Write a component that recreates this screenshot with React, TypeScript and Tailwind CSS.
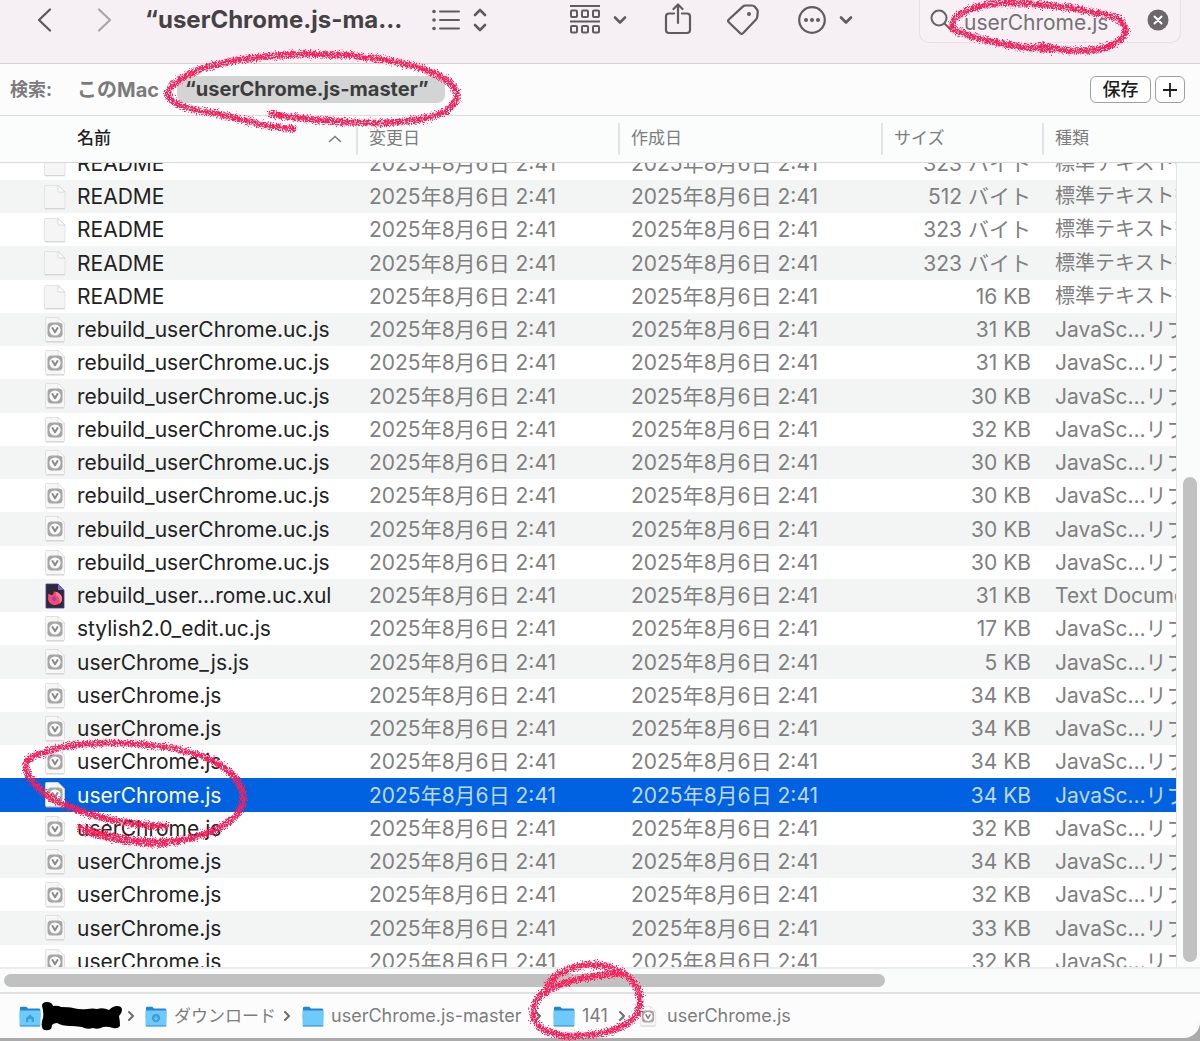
import { useEffect, useRef, useState } from 'react';

type FileKind = 'text' | 'js' | 'xul';

type FileRow = {
  name: string;
  kind: FileKind;
  size: string;
  selected?: boolean;
};

const DATE = '2025年8月6日 2:41';

const KIND_LABEL: Record<FileKind, string> = {
  text: '標準テキスト書類',
  js: 'JavaSc…リプト',
  xul: 'Text Document',
};

const rebuild = (size: string): FileRow => ({ name: 'rebuild_userChrome.uc.js', kind: 'js', size });
const chrome = (size: string, selected = false): FileRow => ({ name: 'userChrome.js', kind: 'js', size, selected });

const files: FileRow[] = [
  { name: 'README', kind: 'text', size: '323 バイト' },
  { name: 'README', kind: 'text', size: '512 バイト' },
  { name: 'README', kind: 'text', size: '323 バイト' },
  { name: 'README', kind: 'text', size: '323 バイト' },
  { name: 'README', kind: 'text', size: '16 KB' },
  rebuild('31 KB'),
  rebuild('31 KB'),
  rebuild('30 KB'),
  rebuild('32 KB'),
  rebuild('30 KB'),
  rebuild('30 KB'),
  rebuild('30 KB'),
  rebuild('30 KB'),
  { name: 'rebuild_user...rome.uc.xul', kind: 'xul', size: '31 KB' },
  { name: 'stylish2.0_edit.uc.js', kind: 'js', size: '17 KB' },
  { name: 'userChrome_js.js', kind: 'js', size: '5 KB' },
  chrome('34 KB'),
  chrome('34 KB'),
  chrome('34 KB'),
  chrome('34 KB', true),
  chrome('32 KB'),
  chrome('34 KB'),
  chrome('32 KB'),
  chrome('33 KB'),
  chrome('32 KB'),
];

function FileIcon({ kind, className }: { kind: FileKind; className: string }) {
  if (kind === 'xul') {
    return (
      <svg viewBox="0 0 22 26" className={className} aria-hidden="true">
        <path d="M2 1h12l6 6v18H2z" fill="#2b2a3d" stroke="#4b3a8c" strokeWidth="0.8" />
        <path d="M14 1l6 6h-6z" fill="#7a6bd0" />
        <path d="M3.800 11.500c1.500-.8 3 .2 4.200.8 1-.8 2.200-2.300 1.700-3.800 5 .5 8.300 3.500 8.300 7.200a6.700 6.700 0 0 1-6.900 6.300c-4 0-7-2.800-7-6.300 0-1.500.3-3-.3-4.200z" fill="#ff4470" />
        <path d="M12 8.800c3.500 1 6 3.700 6 6.900 0 2-1 3.800-2.500 5 .8-4.200-.5-7.200-3.500-8.200z" fill="#ff8093" />
        <path d="M8 14.500c1.200-1.200 3-.8 3.800.3s.2 3-1.400 3.200S7.300 16.300 8 14.500z" fill="#7a4fc4" />
      </svg>
    );
  }
  if (kind === 'text') {
    return (
      <svg viewBox="0 0 22 26" className={className} aria-hidden="true">
        <path d="M1.500 1.500H14l7 6.500v15.500a1 1 0 0 1-1 1H1.500a1 1 0 0 1-1-1v-21a1 1 0 0 1 1-1z" fill="#f5f5f5" stroke="#dedede" strokeWidth="0.8" />
        <path d="M14 1.500V7a1 1 0 0 0 1 1h6z" fill="#ffffff" stroke="#cfcfcf" strokeWidth="0.8" />
        <path d="M1 24.800h20" stroke="#c8c8c8" strokeWidth="0.8" />
      </svg>
    );
  }
  return (
    <svg viewBox="0 0 22 26" className={className} aria-hidden="true">
      <path d="M2.500 0.500H14L20.500 7v16.500a1 1 0 0 1-1 1h-17a1 1 0 0 1-1-1v-22a1 1 0 0 1 1-1z" fill="#f7f7f7" stroke="#dadada" strokeWidth="0.8" />
      <path d="M14 0.500V7h6.500z" fill="#ffffff" stroke="#d4d4d4" strokeWidth="0.6" />
      <rect x="3.500" y="5.500" width="15" height="15" rx="4" fill="#a6a6a6" />
      <circle cx="11" cy="13" r="5.600" fill="#fafafa" />
      <path d="M8.500 11l2.500 4.200 2.500-4.200" fill="none" stroke="#8a8a8a" strokeWidth="2" strokeLinecap="round" strokeLinejoin="round" />
      <path d="M2 25h18" stroke="#c8c8c8" strokeWidth="0.8" />
    </svg>
  );
}

function FolderIcon({ glyph }: { glyph?: 'home' | 'download' }) {
  return (
    <svg viewBox="0 0 22 21" className="h-[21px] w-[22px] shrink-0" aria-hidden="true">
      <path d="M1 2a1.300 1.300 0 0 1 1.300-1.300h5L9 2.500h11A1.300 1.300 0 0 1 21.300 4v8H.7z" fill="#2087cf" />
      <rect x="0.500" y="4.500" width="21" height="16" rx="1.300" fill="#6dcafb" />
      <path d="M1 19.800h20" stroke="#45a6e2" strokeWidth="1.400" />
      {glyph === 'home' && <path d="M7 12l4-3.500 4 3.500v4h-2.500v-3h-3v3H7z" fill="#3b9fdb" />}
      {glyph === 'download' && (
        <>
          <circle cx="11" cy="12" r="4.200" fill="#3b9fdb" />
          <path d="M11 9.800v4M9.300 12.200l1.700 1.700 1.700-1.700" fill="none" stroke="#6dcafb" strokeWidth="1.200" />
        </>
      )}
    </svg>
  );
}

function DownChevron() {
  return (
    <svg viewBox="0 0 14 10" className="h-[10px] w-[14px]" fill="none" stroke="#5f5b5e" strokeWidth="2.600" strokeLinecap="round" strokeLinejoin="round" aria-hidden="true">
      <path d="M2 2.500l5 5 5-5" />
    </svg>
  );
}

function PathArrow() {
  return (
    <svg viewBox="0 0 8 12" className="h-3 w-2 shrink-0" fill="none" stroke="#6c6c6c" strokeWidth="2" strokeLinecap="round" strokeLinejoin="round" aria-hidden="true">
      <path d="M2 2l4 4-4 4" />
    </svg>
  );
}

function Toolbar() {
  const [query, setQuery] = useState('userChrome.js');
  return (
    <header className="flex h-16 shrink-0 items-start border-b border-[#d6d1d4] bg-[#f6f0f4] pl-[37px] pr-[19px]">
      <button aria-label="戻る" className="flex h-10 items-center">
        <svg viewBox="0 0 16 24" className="h-6 w-4" fill="none" stroke="#5a5659" strokeWidth="2.200" strokeLinecap="round" strokeLinejoin="round">
          <path d="M13 1.500L2 12l11 10.500" />
        </svg>
      </button>
      <button aria-label="進む" className="ml-11 flex h-10 items-center">
        <svg viewBox="0 0 16 24" className="h-6 w-4" fill="none" stroke="#aaa5a8" strokeWidth="2.200" strokeLinecap="round" strokeLinejoin="round">
          <path d="M2 1.500L13 12 2 22.500" />
        </svg>
      </button>
      <h1 className="ml-8 h-10 w-[278px] shrink-0 whitespace-nowrap text-2xl leading-10 font-bold text-[#454244]">“userChrome.js-ma...</h1>
      <button aria-label="リスト表示" className="ml-2 flex h-10 items-center gap-3">
        <svg viewBox="0 0 30 24" className="h-6 w-[30px]" fill="none" stroke="#5f5b5e" strokeWidth="2" strokeLinecap="round">
          <path d="M9 3.500h19M9 12h19M9 20.500h19" />
          <g fill="#5f5b5e" stroke="none">
            <circle cx="3" cy="3.500" r="1.800" />
            <circle cx="3" cy="12" r="1.800" />
            <circle cx="3" cy="20.500" r="1.800" />
          </g>
        </svg>
        <svg viewBox="0 0 14 24" className="h-6 w-[14px]" fill="none" stroke="#5f5b5e" strokeWidth="2.600" strokeLinecap="round" strokeLinejoin="round">
          <path d="M2 7l5-5 5 5M2 17l5 5 5-5" />
        </svg>
      </button>
      <button aria-label="グループ分け" className="ml-[82px] flex h-10 items-center gap-3">
        <svg viewBox="0 0 32 32" className="size-8" fill="none" stroke="#5f5b5e" strokeWidth="2">
          <path d="M1 2h30M1 17.500h30" />
          <rect x="2" y="6.500" width="6" height="6.500" rx="1" />
          <rect x="13" y="6.500" width="6" height="6.500" rx="1" />
          <rect x="24" y="6.500" width="6" height="6.500" rx="1" />
          <rect x="2" y="22" width="6" height="6.500" rx="1" />
          <rect x="13" y="22" width="6" height="6.500" rx="1" />
          <rect x="24" y="22" width="6" height="6.500" rx="1" />
        </svg>
        <DownChevron />
      </button>
      <button aria-label="共有" className="ml-[37px] flex h-10 items-center">
        <svg viewBox="0 0 28 34" className="h-[34px] w-7" fill="none" stroke="#5f5b5e" strokeWidth="2.200" strokeLinecap="round" strokeLinejoin="round">
          <path d="M10 10.500H5A3 3 0 0 0 2 13.500V27a3 3 0 0 0 3 3h18a3 3 0 0 0 3-3V13.500a3 3 0 0 0-3-3h-5" />
          <path d="M14 20V2M9.500 6L14 1.500 18.500 6" />
        </svg>
      </button>
      <button aria-label="タグ" className="ml-[33px] flex h-10 items-center">
        <svg viewBox="0 0 36 34" className="h-[34px] w-9" fill="none" stroke="#5f5b5e" strokeWidth="2.200" strokeLinejoin="round">
          <path d="M20.500 2.500H27a4 4 0 0 1 3 1.500l2 2.500a4 4 0 0 1 .8 2.500l-.6 5a4 4 0 0 1-1.200 2.500L18 30.200a2 2 0 0 1-2.800 0L3.800 19.300a2 2 0 0 1 0-2.800L17.800 3.600a4 4 0 0 1 2.700-1.100z" />
          <circle cx="24" cy="11" r="2" fill="#5f5b5e" stroke="none" />
        </svg>
      </button>
      <button aria-label="その他" className="ml-9 flex h-10 items-center gap-3">
        <svg viewBox="0 0 30 30" className="size-[30px]" fill="none" stroke="#5f5b5e" strokeWidth="2.200">
          <circle cx="15" cy="15" r="12.800" />
          <g fill="#5f5b5e" stroke="none">
            <circle cx="9" cy="15" r="2" />
            <circle cx="15" cy="15" r="2" />
            <circle cx="21" cy="15" r="2" />
          </g>
        </svg>
        <DownChevron />
      </button>
      <div className="ml-auto flex h-[43px] w-[262px] items-start rounded-b-[10px] border border-t-0 border-[#e6e0e4] bg-[#f7f1f5] pt-[9px] pl-[10px] pr-[11px]">
        <svg viewBox="0 0 22 22" className="size-[22px] shrink-0" fill="none" stroke="#666265" strokeWidth="2" strokeLinecap="round" aria-hidden="true">
          <circle cx="9" cy="9" r="7.500" />
          <path d="M14.500 14.500l6 6" />
        </svg>
        <input
          aria-label="検索"
          value={query}
          onChange={e => setQuery(e.target.value)}
          className="ml-3 h-7 w-full min-w-0 bg-transparent text-[21px] text-[#757174] outline-none"
        />
        <button aria-label="検索をクリア" className="shrink-0" onClick={() => setQuery('')}>
          <svg viewBox="0 0 22 22" className="size-[22px]">
            <circle cx="11" cy="11" r="10.500" fill="#6b676a" />
            <path d="M7.500 7.500l7 7M14.500 7.500l-7 7" stroke="#fff" strokeWidth="2" strokeLinecap="round" />
          </svg>
        </button>
      </div>
    </header>
  );
}

function ScopeBar() {
  return (
    <div className="flex h-[52px] shrink-0 items-center border-b border-[#dcdcdc] bg-[#fcfcfc] pl-[10px] pr-[15px] text-xl font-bold text-[#7b7b7b]">
      <span className="w-[67px] text-lg">検索:</span>
      <button>このMac</button>
      <button className="ml-[18px] h-[27px] rounded-lg bg-[#d3d5d4] pl-2 pr-4 leading-[27px] text-[#3c3c3c]">“userChrome.js-master”</button>
      <div className="ml-auto flex gap-1 text-lg font-medium text-[#1c1c1c]">
        <button className="h-[27px] w-[61px] rounded-md border border-[#9f9f9f] bg-white leading-[24px]">保存</button>
        <button aria-label="条件を追加" className="flex h-[27px] w-[30px] items-center justify-center rounded-md border border-[#9f9f9f] bg-white">
          <svg viewBox="0 0 16 16" className="size-4" stroke="#1c1c1c" strokeWidth="1.800">
            <path d="M8 1v14M1 8h14" />
          </svg>
        </button>
      </div>
    </div>
  );
}

function FileList() {
  const scroller = useRef<HTMLDivElement>(null);

  // the list opens partly scrolled, with the first row half under the header
  useEffect(() => {
    if (scroller.current) scroller.current.scrollTop = 16;
  }, []);

  const th = 'h-[47px] border-b border-[#d9d9d9] bg-[#fbfcfc] text-left text-[17px] font-normal text-[#7c7c7c]';
  const divider = 'flex h-8 items-center border-l-2 border-[#e4e4e4] pl-[11px]';

  return (
    <div className="relative min-h-0 flex-1 bg-[#fafbfb]">
      <div ref={scroller} className="h-full overflow-y-auto [scrollbar-width:none]">
        <table className="w-full table-fixed border-separate border-spacing-0">
          <colgroup>
            <col className="w-[356px]" />
            <col className="w-[262px]" />
            <col className="w-[263px]" />
            <col className="w-[161px]" />
            <col />
            <col className="w-[23px]" />
          </colgroup>
          <thead className="sticky top-0 z-10">
            <tr>
              <th className={th}>
                <button className="flex w-full items-center justify-between pl-[77px] pr-[14px] font-medium text-[#1f1f1f]">
                  名前
                  <svg viewBox="0 0 14 8" className="h-2 w-[14px]" fill="none" stroke="#7c7c7c" strokeWidth="1.600" aria-hidden="true">
                    <path d="M1 7l6-5.500L13 7" />
                  </svg>
                </button>
              </th>
              <th className={th}><div className={divider}>変更日</div></th>
              <th className={th}><div className={divider}>作成日</div></th>
              <th className={th}><div className={divider}>サイズ</div></th>
              <th className={th} colSpan={2}><div className={divider}>種類</div></th>
            </tr>
          </thead>
          <tbody className="text-[21px]">
            {files.map((file, i) => (
              <tr
                key={i}
                className={`h-[33px] leading-[33px] whitespace-nowrap nth-[4n]:h-[34px] ${
                  file.selected ? 'bg-[#0062e0] text-[#bfd8f8]' : i % 2 ? 'bg-[#f3f5f4] text-[#808080]' : 'bg-white text-[#808080]'
                }`}
              >
                <td className={`overflow-hidden p-0 ${file.selected ? 'text-white' : 'text-[#222222]'}`}>
                  <div className="flex items-center gap-[11px] pl-11">
                    <FileIcon kind={file.kind} className="h-[26px] w-[22px] shrink-0" />
                    {file.name}
                  </div>
                </td>
                <td className="p-0 pl-[13px]">{DATE}</td>
                <td className="p-0 pl-[13px]">{DATE}</td>
                <td className="p-0 pr-[11px] text-right">{file.size}</td>
                <td className={`overflow-hidden border-r border-[#e4e4e4] p-0 pl-[13px] ${file.kind === 'text' ? 'text-xl/[33px]' : ''}`}>
                  {KIND_LABEL[file.kind]}
                </td>
                <td className="bg-[#fafbfb] p-0" />
              </tr>
            ))}
          </tbody>
        </table>
      </div>
      <div className="absolute right-[3px] bottom-[5px] z-20 h-[485px] w-[14px] rounded-full bg-[#c1c1c1]" />
    </div>
  );
}

function PathBar() {
  return (
    <nav aria-label="パス" className="bg-[#ababab] pb-[3px]">
      <ol className="flex h-[46px] items-center rounded-br-[16px] border-t-2 border-[#e0e2e1] bg-[#fdfcfd] pl-[19px] text-lg whitespace-nowrap text-[#7c7c7c]">
        <li className="flex items-center">
          <FolderIcon glyph="home" />
          {/* user name, scribbled over */}
          <svg viewBox="0 0 82 30" className="mr-1 h-[30px] w-[82px]" aria-hidden="true">
            <path d="M1 5q0-4 5-4 5 0 6 4 5-1 8 1 8 0 12 1 8 2 14 1 6-1 10 0 6-2 12 1 4-4 8-4 5 0 5 4 0 3-3 6 1 5 1 10-2 3-7 2-6-2-10-1-5 3-10 1-6 2-11-1-7-1-12-1-8 0-13-3-3 0-5 2 0 5-4 5-5 1-6-3-1-4 1-9Q3 11 1 5z" fill="#000" />
          </svg>
          <PathArrow />
        </li>
        <li className="ml-[10px] flex items-center">
          <FolderIcon glyph="download" />
          <a href="#downloads" className="ml-[7px] w-[109px] text-[17px]">ダウンロード</a>
          <PathArrow />
        </li>
        <li className="ml-[11px] flex items-center">
          <FolderIcon />
          <a href="#master" className="ml-[7px] w-[203px]">userChrome.js-master</a>
          <PathArrow />
        </li>
        <li className="ml-[11px] flex items-center">
          <FolderIcon />
          <a href="#141" className="ml-[7px] w-9">141</a>
          <PathArrow />
        </li>
        <li className="ml-[11px] flex items-center">
          <FileIcon kind="js" className="h-[21px] w-[22px]" />
          <a href="#file" className="ml-2">userChrome.js</a>
        </li>
      </ol>
    </nav>
  );
}

// Red crayon circles over the window
function Annotations() {
  return (
    <svg viewBox="0 0 1200 1041" className="pointer-events-none absolute top-0 left-0 z-30 h-[1041px] w-[1200px]" aria-hidden="true">
      <defs>
        <filter id="crayon" x="0" y="0" width="1200" height="1041" filterUnits="userSpaceOnUse">
          <feTurbulence type="fractalNoise" baseFrequency="0.85" numOctaves="2" seed="4" result="noise" />
          <feDisplacementMap in="SourceGraphic" in2="noise" scale="9" xChannelSelector="R" yChannelSelector="G" result="rough" />
          <feColorMatrix in="noise" type="matrix" values="0 0 0 0 0  0 0 0 0 0  0 0 0 0 0  0 0 0 -5 3.600" result="holes" />
          <feComposite in="rough" in2="holes" operator="in" />
        </filter>
      </defs>
      <g fill="none" stroke="#ff1b58" strokeWidth="6.500" strokeLinecap="round" filter="url(#crayon)">
        <path d="M293 129C262 127 240 118 208 112C180 108 162 100 170 88C187 68 230 56 310 54C360 54 420 62 446 80C464 92 460 109 430 117C390 128 320 122 271 114" />
        <path d="M1050 50C1010 47 970 38 953 29C946 18 970 5 1000 3C1040 2 1090 10 1117 18C1134 30 1124 43 1100 49C1080 52 1060 51 1040 45" />
        <path d="M166 826C120 826 75 812 48 796C20 775 20 757 40 754C80 737 160 741 205 757C245 775 250 800 236 816C215 835 175 846 140 841C115 838 95 832 80 827" />
        <path d="M84 830C105 838 140 843 165 843" strokeWidth="8" />
        <path d="M622 974C590 974 550 984 538 998C525 1020 540 1033 565 1036C600 1037 637 1028 640 1005C642 985 625 968 600 965C575 962 555 975 548 984" />
      </g>
    </svg>
  );
}

export default function App() {
  return (
    <div className="relative flex h-screen flex-col overflow-hidden bg-[#fafbfb] font-['Inter','Noto_Sans_CJK_JP',sans-serif]">
      <Toolbar />
      <ScopeBar />
      <FileList />
      <div className="shrink-0 border-t-2 border-[#ececec] py-[5px] pr-[315px] pl-1">
        <div className="h-[13px] rounded-full bg-[#c1c1c1]" />
      </div>
      <PathBar />
      <Annotations />
    </div>
  );
}
